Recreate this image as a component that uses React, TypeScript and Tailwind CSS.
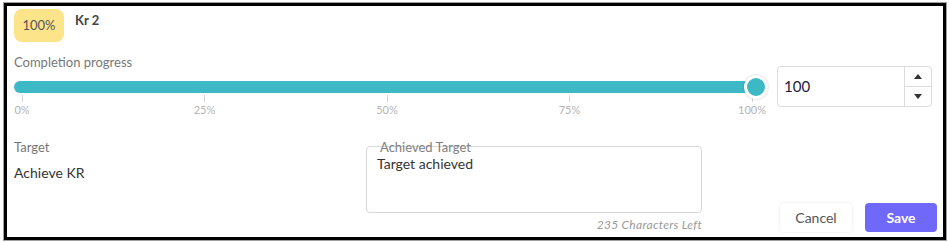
import { useState } from 'react'

const ticks = ['0%', '25%', '50%', '75%', '100%']

export default function App() {
  const [value, setValue] = useState(100)
  const [achieved, setAchieved] = useState('Target achieved')
  const maxChars = 250

  return (
    <div className="w-[950px] h-[242px] bg-white pt-[3px] pl-[4px] font-['Lato','Noto_Sans',sans-serif]">
      <div className="w-[942px] h-[237px] border-[3px] border-black shadow-[0_0_0_1px_#a0a0a0] pt-[3px] pl-[6px] pr-[6px] flex flex-col">
        {/* Header */}
        <div className="flex items-start gap-[11px] ml-[1px]">
          <div className="w-[50px] h-[33px] rounded-[8px] bg-[#fce48b] flex items-center justify-center text-[13px] text-[#555]">
            {value}%
          </div>
          <div className="mt-[3px] text-[13px] leading-[16px] font-bold text-[#444]">Kr 2</div>
        </div>

        {/* Progress */}
        <div className="flex items-start mt-[12px] ml-[1px]">
          <div className="w-[754px] flex flex-col">
            <div className="text-[13px] leading-[16px] text-[#777]">Completion progress</div>
            <div className="relative mt-[11px] w-[742px] h-[12px] rounded-l-full bg-[#3db9c5]">
              <div className="absolute right-[-12px] top-[-6px] w-[24px] h-[24px] rounded-full bg-[#3db9c5] border-[3px] border-white shadow-[0_0_2px_rgba(0,0,0,0.25)]" />
            </div>
            <div className="ml-[8px] w-[730px] mt-[2px] flex justify-between">
              {ticks.map((t) => (
                <div key={t} className="w-0 flex flex-col items-center">
                  <div className="w-px h-[7px] bg-[#d4d4d4]" />
                  <div className="mt-[1px] text-[11px] leading-[13px] text-[#b4b4b4] whitespace-nowrap">{t}</div>
                </div>
              ))}
            </div>
          </div>
          <div className="ml-[9px] mt-[12px] w-[155px] h-[41px] border border-[#dcdcdc] rounded-[4px] flex">
            <input
              value={value}
              onChange={(e) => setValue(Number(e.target.value) || 0)}
              className="flex-1 min-w-0 pl-[6px] text-[15px] text-[#1d1d3a] outline-none bg-transparent"
            />
            <div className="w-[27px] border-l border-[#dcdcdc] flex flex-col">
              <button className="flex-1 flex items-center justify-center border-b border-[#dcdcdc]">
                <span className="w-0 h-0 border-l-[4px] border-r-[4px] border-b-[5px] border-l-transparent border-r-transparent border-b-[#333]" />
              </button>
              <button className="flex-1 flex items-center justify-center">
                <span className="w-0 h-0 border-l-[4px] border-r-[4px] border-t-[5px] border-l-transparent border-r-transparent border-t-[#333]" />
              </button>
            </div>
          </div>
        </div>

        {/* Target */}
        <div className="flex items-start mt-[23px] ml-[1px]">
          <div className="w-[352px]">
            <div className="text-[13px] leading-[16px] text-[#777]">Target</div>
            <div className="mt-[8px] text-[14px] leading-[20px] text-[#333]">Achieve KR</div>
          </div>
          <div className="w-[336px] mt-[7px] flex flex-col">
            <div className="relative h-[67px] border border-[#d8d8d8] rounded-[4px]">
              <span className="absolute left-[13px] top-[-7px] text-[13px] leading-[14px] text-[#808080]">Achieved Target</span>
              <textarea
                value={achieved}
                onChange={(e) => setAchieved(e.target.value.slice(0, maxChars))}
                className="w-full h-full resize-none outline-none bg-transparent pl-[10px] pt-[8px] text-[14px] leading-[18px] text-[#333]"
              />
            </div>
            <div className="mt-[5px] text-right text-[12px] leading-[14px] italic tracking-[0.3px] text-[#9a9a9a]">
              {maxChars - achieved.length} Characters Left
            </div>
          </div>
          <div className="flex-1 self-end flex justify-end gap-[13px]">
            <button className="w-[72px] h-[29px] rounded-[4px] bg-white shadow-[0_0_3px_rgba(0,0,0,0.1)] text-[14px] text-[#555]">
              Cancel
            </button>
            <button className="w-[72px] h-[29px] rounded-[4px] bg-[#6f68f9] text-[14px] font-bold text-white">
              Save
            </button>
          </div>
        </div>
      </div>
    </div>
  )
}
